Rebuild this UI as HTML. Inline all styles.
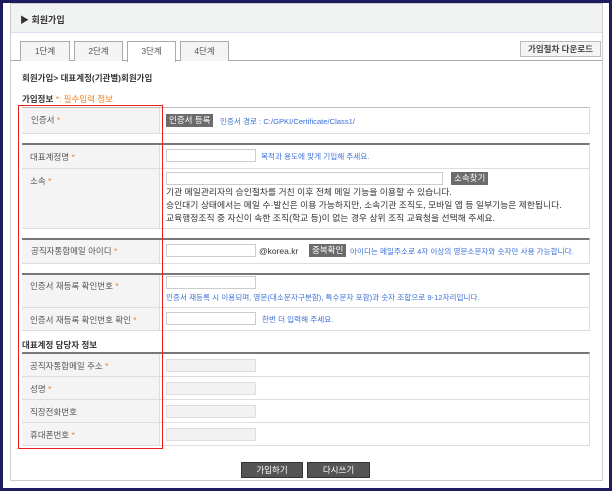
<!DOCTYPE html><html><head><meta charset="utf-8"><style>
*{margin:0;padding:0;box-sizing:border-box}
body{width:612px;height:491px;background:#1c1c5e;font-family:"Liberation Sans","Noto Sans CJK KR",sans-serif;font-size:8.5px;color:#333;position:relative;overflow:hidden}
.a{position:absolute;white-space:nowrap}
.inner{left:3px;top:3px;width:606px;height:485px;background:#fff}
.panel{left:10px;top:3px;width:593px;height:478px;border:1px solid #ccc;background:#fff}
.hdr{left:11px;top:4px;width:591px;height:29px;background:#f1f3f3;border-bottom:1px solid #dde}
.tab{top:41px;height:20px;border:1px solid #aaa;border-bottom:none;background:#f4f4f4;text-align:center;line-height:19px;font-size:8.5px;color:#555}
.lbl{background:#f4f4f4;border-right:1px solid #ddd;color:#555;padding-left:9px;font-size:8.5px}
.st{color:#f08020}
.inp{height:13px;border:1px solid #ccc;background:#fff}
.inpg{height:13px;border:1px solid #ddd;background:#f2f2f2}
.blue{color:#3b6fd8;font-size:7.6px}
.btn{background:#6b6b6b;color:#fff;font-size:8.5px;padding:0 3px;height:13px;line-height:13px}
</style></head><body>
<div class="a inner"></div>
<div class="a panel"></div>
<div class="a hdr"></div>
<div class="a" style="left:20px;top:13px;font-weight:bold;font-size:9px;color:#333">▶ 회원가입</div>
<div class="a" style="left:11px;top:60px;width:591px;border-top:1px solid #aaa"></div>
<div class="a tab" style="left:20px;width:50px">1단계</div>
<div class="a tab" style="left:74px;width:49px">2단계</div>
<div class="a tab" style="left:127px;width:49px;background:#fff;height:21px">3단계</div>
<div class="a tab" style="left:180px;width:49px">4단계</div>
<div class="a" style="left:520px;top:41px;width:81px;height:16px;border:1px solid #bbb;background:#f4f4f4;font-weight:bold;font-size:8.5px;text-align:center;line-height:14px;color:#444">가입절차 다운로드</div>
<div class="a" style="left:22px;top:72px;font-weight:bold;font-size:8.5px;color:#333">회원가입&gt; 대표계정(기관별)회원가입</div>
<div class="a" style="left:22px;top:93px;font-weight:bold;font-size:8.5px">가입정보 <span class="st" style="font-weight:normal">*: 필수입력 정보</span></div>

<div class="a" style="left:22px;top:107px;width:568px;height:27px;border-top:1px solid #bbb;border-bottom:1px solid #ddd;border-right:1px solid #ddd"></div>
<div class="a lbl" style="left:22px;top:108px;width:138px;height:25px;line-height:25px">인증서 <span class="st">*</span></div>
<div class="a btn" style="left:166px;top:114px">인증서 등록</div>
<div class="a blue" style="left:220px;top:116px">인증서 경로 : C:/GPKI/Certificate/Class1/</div>

<div class="a" style="left:22px;top:143px;width:568px;height:86px;border-top:2px solid #777;border-bottom:1px solid #ddd;border-right:1px solid #ddd"></div>
<div class="a lbl" style="left:22px;top:145px;width:138px;height:83px"></div>
<div class="a" style="left:22px;top:168px;width:568px;border-top:1px solid #ddd"></div>
<div class="a" style="left:30px;top:151px;color:#555">대표계정명 <span class="st">*</span></div>
<div class="a inp" style="left:166px;top:149px;width:90px"></div>
<div class="a blue" style="left:261px;top:151px">목적과 용도에 맞게 기입해 주세요.</div>
<div class="a" style="left:30px;top:175px;color:#555">소속 <span class="st">*</span></div>
<div class="a inp" style="left:166px;top:172px;width:277px"></div>
<div class="a btn" style="left:451px;top:172px">소속찾기</div>
<div class="a" style="left:166px;top:186px;line-height:13px;font-size:8.8px;color:#333">기관 메일관리자의 승인절차를 거친 이후 전체 메일 기능을 이용할 수 있습니다.<br>승인대기 상태에서는 메일 수·발신은 이용 가능하지만, 소속기관 조직도, 모바일 앱 등 일부기능은 제한됩니다.<br>교육행정조직 중 자신이 속한 조직(학교 등)이 없는 경우 상위 조직 교육청을 선택해 주세요.</div>

<div class="a" style="left:22px;top:238px;width:568px;height:26px;border-top:2px solid #777;border-bottom:1px solid #ddd;border-right:1px solid #ddd"></div>
<div class="a lbl" style="left:22px;top:240px;width:138px;height:23px;line-height:23px">공직자통합메일 아이디 <span class="st">*</span></div>
<div class="a inp" style="left:166px;top:244px;width:90px"></div>
<div class="a" style="left:259px;top:246px">@korea.kr</div>
<div class="a btn" style="left:309px;top:244px">중복확인</div>
<div class="a blue" style="left:350px;top:246px">아이디는 메일주소로 4자 이상의 영문소문자와 숫자만 사용 가능합니다.</div>

<div class="a" style="left:22px;top:273px;width:568px;height:58px;border-top:2px solid #777;border-bottom:1px solid #ddd;border-right:1px solid #ddd"></div>
<div class="a lbl" style="left:22px;top:275px;width:138px;height:55px"></div>
<div class="a" style="left:22px;top:307px;width:568px;border-top:1px solid #ddd"></div>
<div class="a" style="left:30px;top:280px;color:#555">인증서 재등록 확인번호 <span class="st">*</span></div>
<div class="a inp" style="left:166px;top:276px;width:90px"></div>
<div class="a blue" style="left:166px;top:292px">인증서 재등록 시 이용되며, 영문(대소문자구분함), 특수문자 포함)과 숫자 조합으로 9-12자리입니다.</div>
<div class="a" style="left:30px;top:314px;color:#555">인증서 재등록 확인번호 확인 <span class="st">*</span></div>
<div class="a inp" style="left:166px;top:312px;width:90px"></div>
<div class="a blue" style="left:262px;top:314px">한번 더 입력해 주세요.</div>

<div class="a" style="left:22px;top:339px;font-weight:bold;font-size:8.5px">대표계정 담당자 정보</div>

<div class="a" style="left:22px;top:352px;width:568px;height:94px;border-top:2px solid #777;border-bottom:1px solid #ddd;border-right:1px solid #ddd"></div>
<div class="a lbl" style="left:22px;top:354px;width:138px;height:91px"></div>
<div class="a" style="left:22px;top:376px;width:568px;border-top:1px solid #ddd"></div>
<div class="a" style="left:22px;top:399px;width:568px;border-top:1px solid #ddd"></div>
<div class="a" style="left:22px;top:422px;width:568px;border-top:1px solid #ddd"></div>
<div class="a" style="left:30px;top:360px;color:#555">공직자통합메일 주소 <span class="st">*</span></div>
<div class="a" style="left:30px;top:383px;color:#555">성명 <span class="st">*</span></div>
<div class="a" style="left:30px;top:406px;color:#555">직장전화번호</div>
<div class="a" style="left:30px;top:429px;color:#555">휴대폰번호 <span class="st">*</span></div>
<div class="a inpg" style="left:166px;top:359px;width:90px"></div>
<div class="a inpg" style="left:166px;top:382px;width:90px"></div>
<div class="a inpg" style="left:166px;top:405px;width:90px"></div>
<div class="a inpg" style="left:166px;top:428px;width:90px"></div>

<div class="a" style="left:18px;top:105px;width:145px;height:344px;border:1px solid #e82020"></div>

<div class="a" style="left:241px;top:462px;width:62px;height:16px;background:#555;border:1px solid #333;color:#fff;text-align:center;line-height:14px;font-size:8.5px">가입하기</div>
<div class="a" style="left:307px;top:462px;width:63px;height:16px;background:#555;border:1px solid #333;color:#fff;text-align:center;line-height:14px;font-size:8.5px">다시쓰기</div>
</body></html>
